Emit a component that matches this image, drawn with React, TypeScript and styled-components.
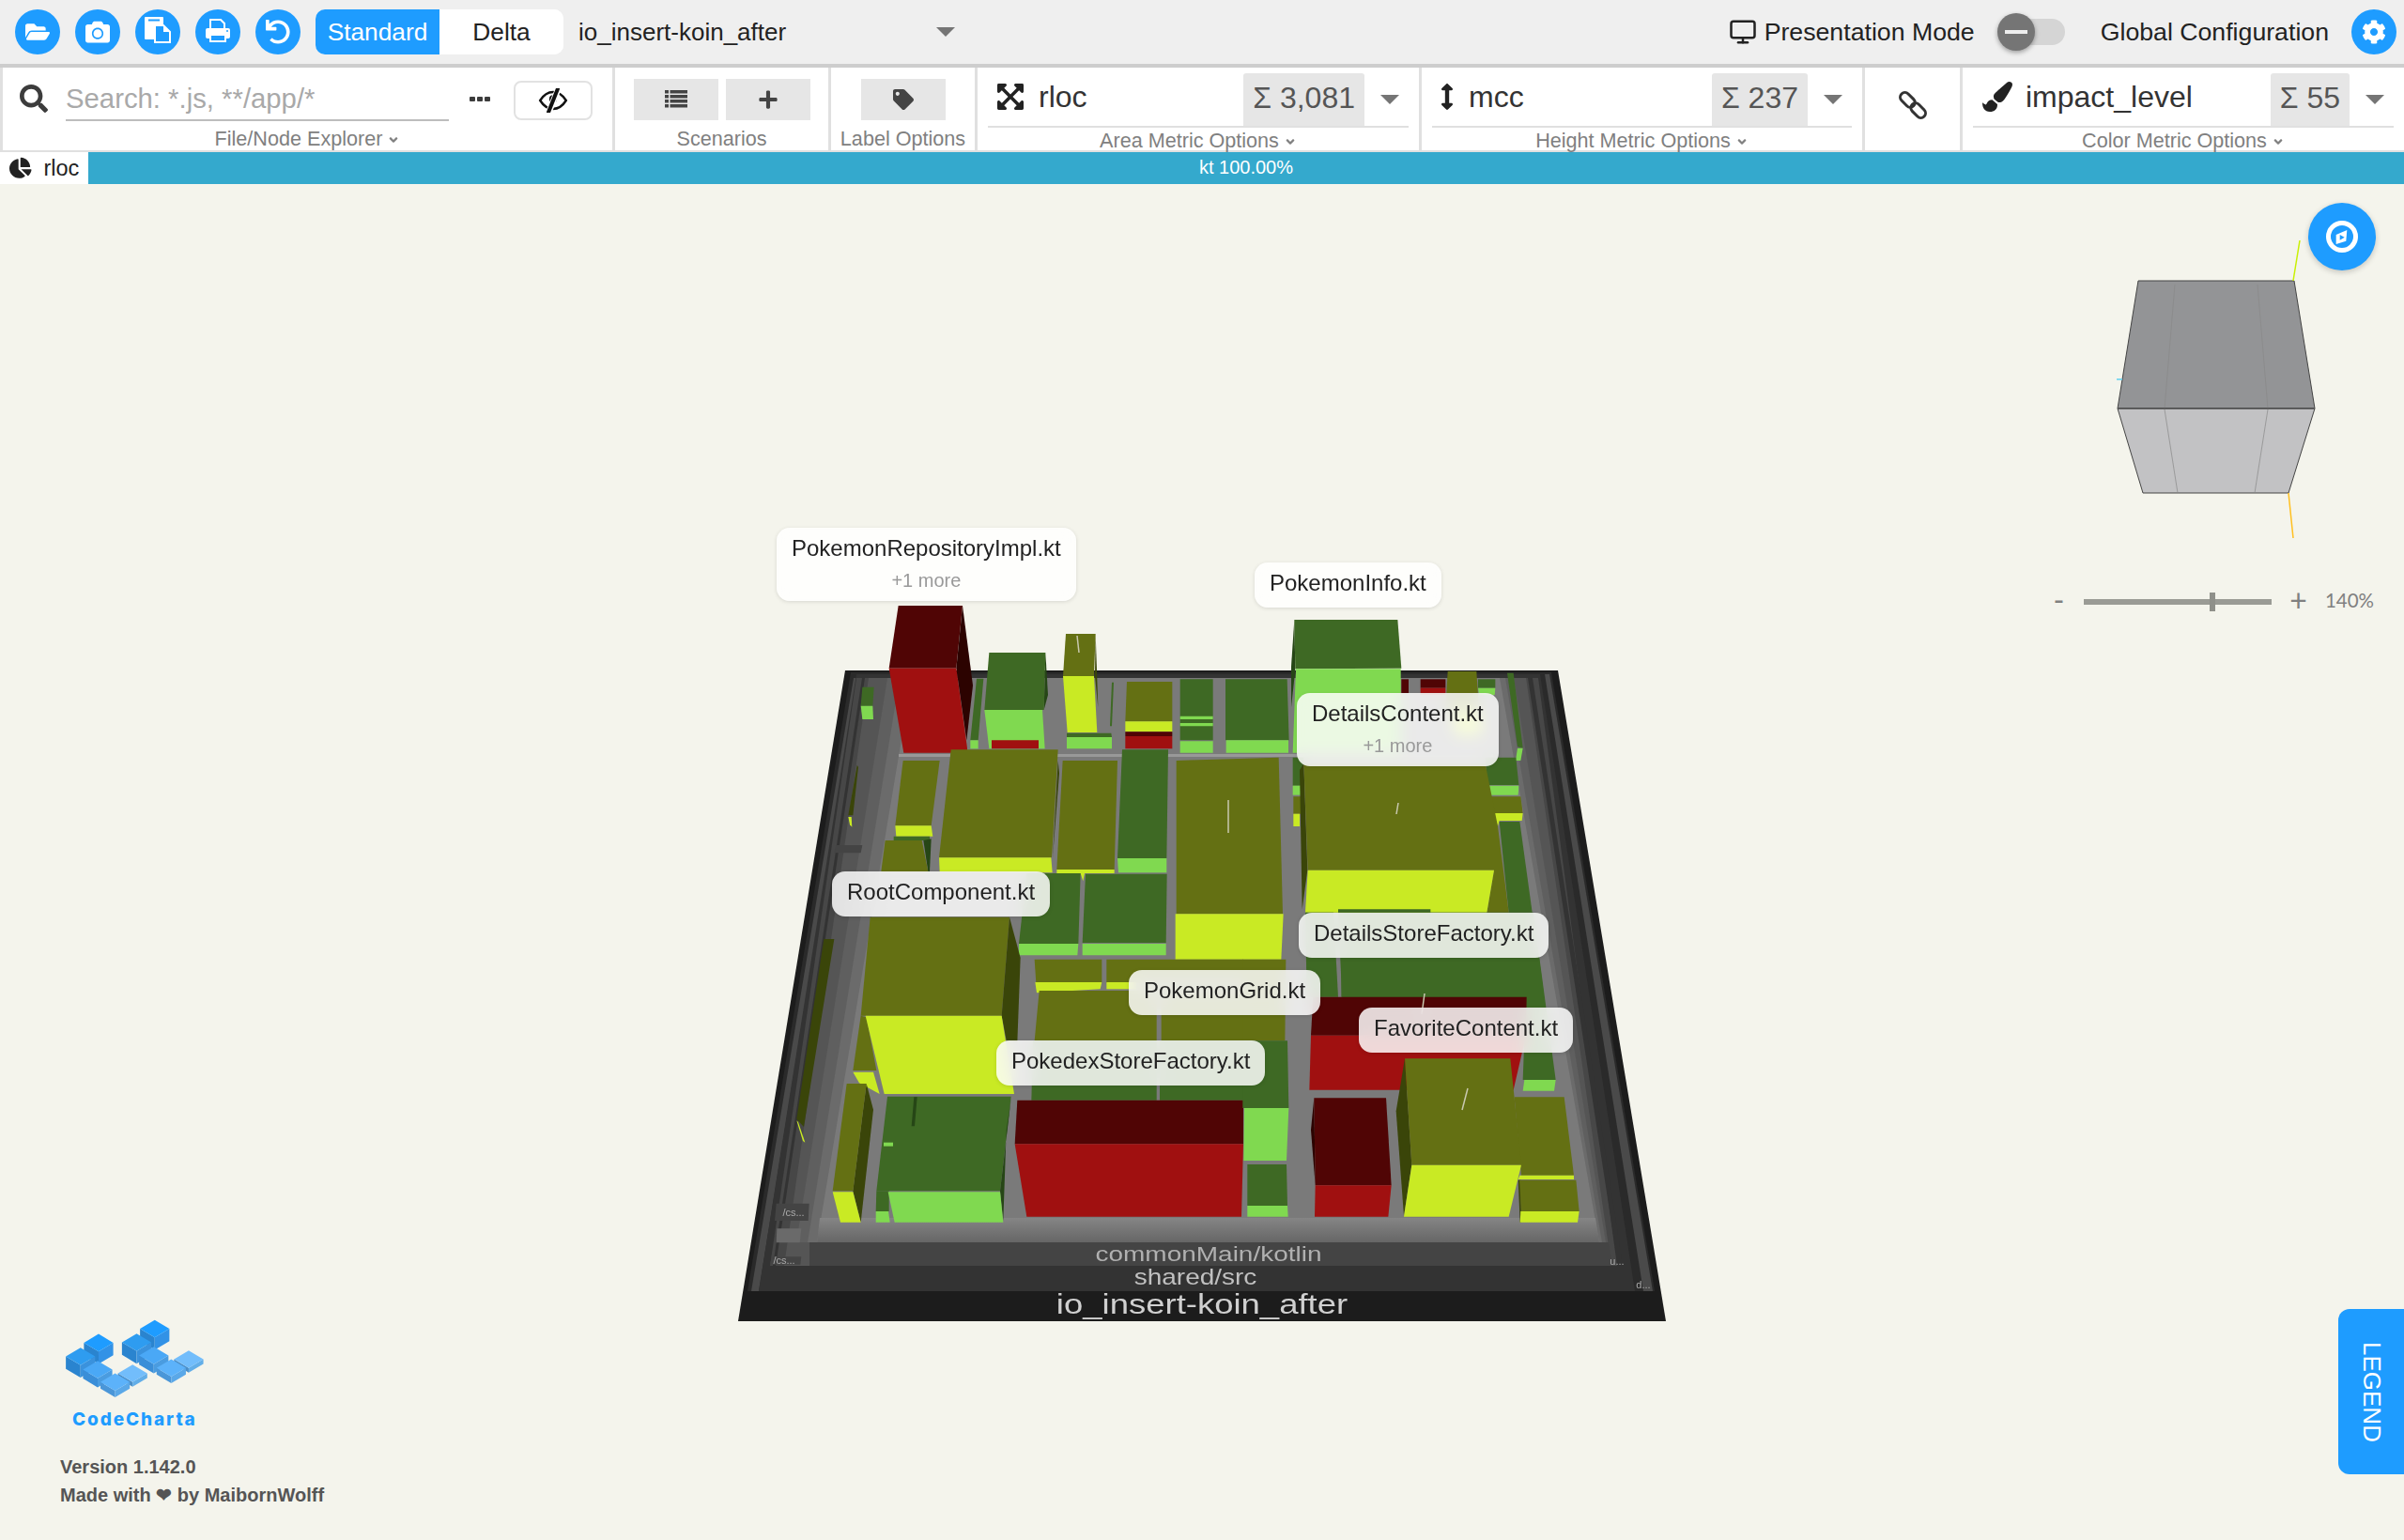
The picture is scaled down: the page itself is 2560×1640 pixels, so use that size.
import React from "react";
import styled, { createGlobalStyle } from "styled-components";
import {
  FaAngleDown,
  FaArrowsAltV,
  FaCamera,
  FaChartPie,
  FaCog,
  FaExpandArrowsAlt,
  FaFolderOpen,
  FaPaintBrush,
  FaPlus,
  FaSearch,
  FaTag,
  FaUndo,
} from "react-icons/fa";
import { FiMonitor } from "react-icons/fi";

const BLUE = "#1e9cff";

const RED = "#a01010";
const RED_TOP = "#500505";
const RED_SIDE = "#2c0300";
const OLIVE = "#647013";
const LIME = "#c9ea24";
const OLIVE_SIDE = "#3a4509";
const GREEN = "#3e6924";
const MINT = "#80d950";
const GREEN_SIDE = "#264616";

type Shape = [string, string];

// crop coordinates (3x) are turned into page coordinates
const fromCrop = (ox: number, oy: number, shapes: Shape[]): Shape[] =>
  shapes.map(([fill, pts]) => [
    fill,
    pts
      .split(" ")
      .map((p) => {
        const [x, y] = p.split(",").map(Number);
        return `${ox + x / 3},${oy + y / 3}`;
      })
      .join(" "),
  ]);

const plate: Shape[] = [
  ["#1c1c1c", "900,714 1659,714 1774,1407 786,1407"],
  ["#2a2a2a", "906,716 1652,716 1762,1375 796,1375"],
  ["#4a4a4a", "909,722 913,722 808,1375 800,1375"],
  ["#4a4a4a", "1645,718 1650,718 1760,1375 1750,1375"],
  ["#333333", "912,718 1640,718 1741,1375 808,1375"],
  ["#474747", "912,722 1638,722 1722,1348 820,1348"],
  ["#333333", "918,722 921,722 826,1348 823,1348"],
  ["#333333", "1627,722 1632,722 1728,1348 1723,1348"],
  ["#555555", "925,722 1625,722 1716,1348 835,1348"],
  ["#5f5f5f", "945,722 1612,722 1710,1323 848,1323"],
  ["#6b6b6b", "958,722 1603,722 1706,1323 860,1323"],
  ["#7a7a7a", "971,722 1597,722 1703,1323 870,1323"],
  ["url(#floorFade)", "873,1297 1699,1297 1703,1323 870,1323"],
  ["#444444", "862,1323 1713,1323 1717,1348 862,1348"],
  ["#999999", "957,803 1590,803 1590,806 957,806"],
];

const backLeft: Shape[] = fromCrop(760, 540, [
  [GREEN, "475,575 512,575 508,635 470,635"],
  [MINT, "470,635 508,635 510,678 475,678"],
  [OLIVE_SIDE, "458,825 462,830 445,985 430,985"],
  [LIME, "430,990 440,990 442,1022 435,1015"],
  ["#444444", "390,1080 475,1080 470,1105 385,1105"],
  [RED_TOP, "590,315 795,315 775,515 560,515"],
  [RED_SIDE, "795,315 828,570 808,745 775,515"],
  [RED, "560,515 775,515 810,770 810,785 607,785"],
  [GREEN, "840,548 862,548 845,745 820,745"],
  [MINT, "820,745 845,745 845,772 820,772"],
  [GREEN_SIDE, "1060,465 1068,600 1055,648"],
  [GREEN, "880,465 1060,465 1055,648 865,648"],
  [MINT, "865,648 1050,648 1058,772 880,772"],
  [RED, "888,745 1038,745 1038,772 888,772"],
  [OLIVE_SIDE, "1220,405 1228,640 1218,540"],
  [OLIVE, "1125,405 1220,405 1215,540 1116,540"],
  [LIME, "1116,540 1215,540 1225,720 1130,720"],
  [GREEN, "1272,560 1278,560 1272,700 1266,700"],
  [GREEN, "1128,722 1270,722 1272,735 1128,735"],
  [MINT, "1128,735 1272,735 1272,772 1128,772"],
  [OLIVE, "1320,558 1465,558 1465,685 1315,685"],
  [LIME, "1315,685 1465,685 1465,718 1315,718"],
  [RED_TOP, "1315,718 1465,718 1465,732 1315,732"],
  [RED, "1315,732 1465,732 1465,772 1315,772"],
  [OLIVE, "605,810 722,810 695,1018 580,1018"],
  [LIME, "580,1018 695,1018 700,1052 583,1052"],
  [GREEN, "575,1052 690,1052 690,1065 575,1065"],
  [GREEN_SIDE, "670,1065 695,1060 690,1165 685,1165"],
  [OLIVE, "548,1065 665,1065 685,1165 535,1165"],
  [OLIVE_SIDE, "1100,810 1104,850 1083,1120"],
  [OLIVE, "758,775 1100,775 1080,1120 720,1120"],
  [LIME, "720,1120 1078,1120 1082,1168 722,1165"],
  [OLIVE, "1115,810 1290,810 1280,1158 1096,1158"],
  [LIME, "1096,1158 1280,1158 1280,1170 1185,1170 1180,1195 1172,1170 1096,1170"],
  [GREEN, "1305,775 1452,775 1447,1122 1290,1122"],
  [MINT, "1290,1122 1447,1122 1447,1168 1293,1168"],
  [GREEN, "1000,1170 1172,1170 1165,1395 975,1395"],
  [MINT, "975,1395 1165,1395 1162,1432 975,1432"],
  [GREEN, "1188,1172 1448,1172 1445,1392 1178,1392"],
  [MINT, "1178,1395 1445,1395 1445,1432 1178,1432"],
]);

const backRight: Shape[] = fromCrop(1260, 580, [
  [GREEN, "-10,430 95,430 95,625 -10,625"],
  [MINT, "-10,548 95,548 95,558 -10,558"],
  [MINT, "-10,570 95,570 95,580 -10,580"],
  [MINT, "-10,628 95,628 95,665 -10,665"],
  [GREEN, "135,430 332,430 338,625 135,625"],
  [MINT, "137,625 336,625 336,665 137,665"],
  [RED_TOP, "697,430 720,430 720,475 697,475"],
  [RED_TOP, "758,430 838,430 838,458 758,458"],
  [RED, "758,458 838,458 838,480 758,480"],
  [OLIVE, "845,405 937,405 945,530 838,530"],
  [LIME, "860,530 950,530 955,610 865,610"],
  [GREEN, "942,430 997,430 997,458 942,458"],
  [MINT, "942,458 997,458 995,480 945,480"],
  [GREEN, "1035,410 1055,410 1085,650 1068,645"],
  [MINT, "1068,650 1085,650 1078,690 1062,690"],
  [GREEN_SIDE, "355,240 345,390 345,520 358,400"],
  [GREEN, "355,240 685,240 697,395 358,397"],
  [MINT, "360,397 695,397 695,665 350,665"],
  [GREEN, "350,680 385,680 378,770 350,770"],
  [MINT, "350,770 378,770 378,800 350,800"],
  [OLIVE, "352,805 378,805 375,860 352,860"],
  [LIME, "352,860 372,860 372,900 352,900"],
  [GREEN, "965,680 1063,680 1072,768 972,768"],
  [MINT, "970,770 1072,770 1070,800 972,800"],
  [OLIVE, "970,805 1078,805 1085,858 972,858"],
  [LIME, "972,858 1085,858 1082,882 1010,882 1005,900 1000,882 972,882"],
  [GREEN, "1010,885 1075,885 1115,1175 1040,1175"],
  [OLIVE_SIDE, "372,720 385,700 397,1040 380,1165"],
  [OLIVE, "385,700 965,700 1005,900 1040,1175 970,1175 993,1040 398,1040"],
  [LIME, "398,1040 993,1040 970,1175 390,1175"],
  [GREEN, "495,1165 790,1165 790,1175 495,1175"],
  [GREEN, "495,1175 1118,1175 1160,1500 510,1500"],
  [GREEN, "390,1175 480,1175 495,1445 395,1445"],
  [OLIVE, "-22,690 305,680 318,1180 -22,1180"],
  [LIME, "-25,1180 320,1180 313,1325 -25,1325"],
]);

const frontLeft: Shape[] = fromCrop(770, 1000, [
  [OLIVE_SIDE, "322,0 355,0 258,600 235,575"],
  [LIME, "235,580 240,585 262,650 255,645"],
  ["#444444", "170,845 275,845 272,900 165,900"],
  ["#6a6a6a", "172,925 250,925 245,970 170,970"],
  ["#444444", "155,1015 250,1015 247,1040 150,1040"],
  [OLIVE, "995,65 1210,65 1210,140 1000,140"],
  [LIME, "997,138 1210,138 1205,160 1002,172"],
  [OLIVE, "1225,65 1662,65 1662,140 1225,140"],
  [LIME, "1225,138 1320,138 1320,160 1225,160"],
  [OLIVE, "1010,165 1385,165 1385,325 995,325"],
  [OLIVE, "1400,165 1662,165 1662,325 1400,325"],
  [GREEN, "990,325 1385,325 1385,515 985,515"],
  [GREEN, "1395,325 1662,325 1662,515 1395,515"],
  [OLIVE, "470,-70 915,-70 890,245 440,245"],
  [OLIVE, "440,245 458,250 490,420 415,420"],
  [LIME, "415,425 480,425 500,495 435,460"],
  [OLIVE_SIDE, "915,-70 950,60 940,330 905,325 890,245"],
  [LIME, "455,245 890,245 930,495 515,495"],
  [OLIVE_SIDE, "458,462 480,545 440,905 415,805"],
  [OLIVE, "395,462 458,462 415,805 350,805"],
  [LIME, "350,808 415,808 440,905 375,905"],
  [GREEN, "525,503 920,503 885,805 490,805"],
  [GREEN, "490,805 530,805 530,870 488,870"],
  [GREEN_SIDE, "610,505 620,505 612,598 602,598"],
  [MINT, "513,650 543,650 543,662 513,662"],
  [GREEN_SIDE, "920,510 905,610 895,900 885,805"],
  [MINT, "527,808 885,808 895,905 548,905"],
  [MINT, "488,870 528,870 533,905 488,905"],
  [RED_TOP, "940,515 1662,515 1662,655 932,655"],
  [RED, "932,655 1662,655 1656,887 970,887"],
]);

const frontRight: Shape[] = fromCrop(1270, 1000, [
  [OLIVE, "160,65 298,65 295,325 160,325"],
  [GREEN, "160,325 303,325 307,540 160,540"],
  [MINT, "165,540 307,540 300,708 163,708"],
  [GREEN, "175,720 300,720 303,852 175,852"],
  [MINT, "175,852 303,852 305,887 175,887"],
  [GREEN, "475,60 1108,60 1160,450 1055,450 1065,185 475,185"],
  [MINT, "1060,450 1160,450 1155,485 1055,485"],
  [RED_TOP, "385,185 1067,185 1065,308 378,308"],
  [RED, "378,308 1065,308 1025,482 373,482"],
  [RED_SIDE, "388,508 378,610 392,787"],
  [RED_TOP, "388,508 618,508 635,787 392,787"],
  [RED, "392,787 635,787 625,887 390,887"],
  [OLIVE, "1028,505 1187,505 1218,755 1050,755"],
  [LIME, "1045,755 1218,755 1218,768 1040,768"],
  [OLIVE_SIDE, "1040,770 1048,770 1050,905 1046,905"],
  [OLIVE, "1044,770 1225,770 1235,870 1050,870"],
  [LIME, "1048,870 1235,870 1230,905 1046,905"],
  [OLIVE_SIDE, "678,382 650,550 675,885 700,722"],
  [OLIVE, "678,382 1015,382 1050,722 700,722"],
  [LIME, "700,722 1050,722 1010,887 675,887"],
]);

const buildings = [...plate, ...backLeft, ...backRight, ...frontLeft, ...frontRight];

const scratches = [
  "1147,677 1149,695",
  "1308,852 1308,887",
  "1489,855 1487,867",
  "1517,1058 1514,1080",
  "1563,1159 1557,1182",
];

const mapTexts = [
  { x: 1287, y: 1343, size: 28, squash: 0.78, fill: "#b0b0b0", text: "commonMain/kotlin" },
  { x: 1273, y: 1368, size: 28, squash: 0.85, fill: "#c0c0c0", text: "shared/src" },
  { x: 1280, y: 1399, size: 36.5, squash: 0.8, fill: "#d0d0d0", text: "io_insert-koin_after" },
  { x: 845, y: 1295, size: 11, squash: 1, fill: "#aaaaaa", text: "/cs..." },
  { x: 835, y: 1346, size: 11, squash: 1, fill: "#aaaaaa", text: "/cs..." },
  { x: 1722, y: 1347, size: 11, squash: 1, fill: "#aaaaaa", text: "u..." },
  { x: 1750, y: 1372, size: 11, squash: 1, fill: "#aaaaaa", text: "d..." },
];

const labels = [
  { x: 827, y: 562, name: "PokemonRepositoryImpl.kt", more: true },
  { x: 1336, y: 599, name: "PokemonInfo.kt" },
  { x: 1381, y: 738, name: "DetailsContent.kt", more: true },
  { x: 886, y: 928, name: "RootComponent.kt" },
  { x: 1383, y: 972, name: "DetailsStoreFactory.kt" },
  { x: 1202, y: 1033, name: "PokemonGrid.kt" },
  { x: 1447, y: 1073, name: "FavoriteContent.kt" },
  { x: 1061, y: 1108, name: "PokedexStoreFactory.kt" },
];

const GlobalStyle = createGlobalStyle`
  html, body {
    margin: 0;
    padding: 0;
    background: #f4f4ec;
  }
  * {
    box-sizing: border-box;
  }
`;

const Page = styled.div`
  display: flex;
  flex-direction: column;
  width: 2560px;
  height: 1640px;
  overflow: hidden;
  font-family: "Liberation Sans", Arial, sans-serif;
  color: #222;
`;

const TopBar = styled.header`
  display: flex;
  align-items: center;
  flex: 0 0 72px;
  padding: 0 8px 0 16px;
  background: #efefef;
  border-bottom: 4px solid #cdcdcd;
`;

const RoundButton = styled.button`
  display: flex;
  align-items: center;
  justify-content: center;
  width: 48px;
  height: 48px;
  padding: 0;
  border: 0;
  border-radius: 50%;
  background: ${BLUE};
  color: #fff;
  font-size: 26px;
`;

const ActionGroup = styled.div`
  display: flex;
  gap: 16px;
  margin-right: 16px;
`;

const ModeSwitch = styled.div`
  display: flex;
  height: 48px;
  border-radius: 10px;
  overflow: hidden;
  background: #fff;
`;

const ModeOption = styled.div<{ $active?: boolean }>`
  display: flex;
  align-items: center;
  justify-content: center;
  width: 132px;
  font-size: 26.3px;
  background: ${(p) => (p.$active ? BLUE : "#fff")};
  color: ${(p) => (p.$active ? "#fff" : "#222")};
`;

const FileSelect = styled.div`
  display: flex;
  align-items: center;
  justify-content: space-between;
  width: 401px;
  margin-left: 16px;
  font-size: 26px;
`;

const Caret = styled.span`
  flex: none;
  width: 0;
  height: 0;
  border-left: 10px solid transparent;
  border-right: 10px solid transparent;
  border-top: 10px solid #757575;
`;

const TopRight = styled.div`
  display: flex;
  align-items: center;
  margin-left: auto;
  font-size: 26.7px;
`;

const MonitorIcon = styled(FiMonitor)`
  width: 30px;
  height: 30px;
  margin-right: 8px;
`;

const ToggleTrack = styled.div`
  position: relative;
  width: 60px;
  height: 28px;
  margin: 0 38px 0 36px;
  border-radius: 14px;
  background: #d5d5d5;
`;

const ToggleThumb = styled.div`
  position: absolute;
  left: -12px;
  top: -6px;
  display: flex;
  align-items: center;
  justify-content: center;
  width: 40px;
  height: 40px;
  border-radius: 50%;
  background: #757575;
  box-shadow: 0 2px 5px rgba(0, 0, 0, 0.35);

  &::after {
    content: "";
    width: 24px;
    height: 4px;
    background: #eee;
  }
`;

const ConfigLabel = styled.span`
  margin-right: 24px;
`;

const Toolbar = styled.div`
  display: grid;
  grid-template-columns: 649px 227px 153px 470px 469px 101px 1fr;
  grid-template-rows: 88px;
  gap: 3px;
  flex: 0 0 90px;
  padding: 0 0 2px 3px;
  background: #e0e0e0;
`;

const Panel = styled.section`
  display: flex;
  flex-direction: column;
  min-width: 0;
  background: #fff;
`;

const ControlRow = styled.div`
  display: flex;
  flex: none;
  align-items: flex-start;
  justify-content: center;
  height: 60px;
  padding-top: 12px;
  gap: 8px;
`;

const SearchRow = styled.div`
  display: flex;
  flex: none;
  align-items: flex-start;
  height: 60px;
  padding: 14px 0 0 17px;
`;

const SearchGlyph = styled(FaSearch)`
  width: 32px;
  height: 30px;
  margin: 4px 18px 0 0;
  color: #3c3c3c;
`;

const SearchInput = styled.input`
  width: 408px;
  height: 43px;
  padding: 0 0 4px;
  border: 0;
  border-bottom: 2px solid #bdbdbd;
  background: transparent;
  font: 29.3px "Liberation Sans", Arial, sans-serif;
  outline: none;

  &::placeholder {
    color: #a9a9a9;
    opacity: 1;
  }
`;

const MoreDots = styled.span`
  display: flex;
  gap: 2px;
  margin: 17px 25px 0 22px;

  & > i {
    width: 6px;
    height: 5px;
    border-radius: 1px;
    background: #3c3c3c;
  }
`;

const EyeButton = styled.button`
  display: flex;
  align-items: center;
  justify-content: center;
  width: 84px;
  height: 42px;
  padding: 0;
  border: 2px solid #e2e2e2;
  border-radius: 8px;
  background: #fff;
`;

const SquareButton = styled.button`
  display: flex;
  align-items: center;
  justify-content: center;
  width: 90px;
  height: 44px;
  padding: 0;
  border: 0;
  background: #e6e6e6;
  color: #444;
  font-size: 22px;
`;

const PanelLabel = styled.div`
  flex: none;
  height: 26px;
  margin-top: 2px;
  font-size: 21.6px;
  line-height: 28px;
  text-align: center;
  color: #808080;
  white-space: nowrap;
`;

const MetricBody = styled.div`
  flex: none;
  padding: 0 11px;
`;

const MetricRow = styled.div`
  display: flex;
  align-items: center;
  height: 64px;
  border-bottom: 2px solid #e0e0e0;
`;

const MetricGlyph = styled.span<{ $offset: number; $width: number; $gap: number }>`
  display: flex;
  flex: none;
  justify-content: center;
  width: ${(p) => p.$width}px;
  margin: 0 ${(p) => p.$gap}px 0 ${(p) => p.$offset}px;
  color: #222;
  font-size: 32px;
`;

const MetricName = styled.span`
  flex: 1;
  font-size: 32px;
  color: #333;
`;

const MetricSum = styled.span`
  align-self: flex-end;
  height: 56px;
  padding: 0 10px 4px;
  border-radius: 3px 3px 0 0;
  background: #e6e6e6;
  color: #555;
  font-size: 32px;
  line-height: 52px;
`;

const MetricCaret = styled(Caret)`
  margin: 6px 10px 0 17px;
`;

const MetricLabel = styled(PanelLabel)`
  height: 22px;
  line-height: 22px;
  margin-top: 3px;
`;

const LinkCell = styled.div`
  display: flex;
  align-items: center;
  justify-content: center;
  height: 80px;
`;

const SmallChevron = styled(FaAngleDown)`
  width: 14px;
  height: 14px;
  margin-left: 5px;
  vertical-align: -1px;
`;

const BreadcrumbBar = styled.div`
  display: flex;
  flex: 0 0 34px;
`;

const MetricTab = styled.div`
  display: flex;
  align-items: center;
  flex: 0 0 94px;
  padding-left: 10px;
  gap: 13px;
  background: #fff;
  font-size: 23.5px;
`;

const ShareBar = styled.div`
  flex: 1;
  background: #34a9cd;
  color: #fff;
  font-size: 20px;
  line-height: 33px;
  text-align: center;
`;

const Canvas = styled.main`
  position: relative;
  flex: 1;
  background: #f4f4ec;
`;

const CityMap = styled.svg`
  position: absolute;
  left: 770px;
  top: 344px;
  width: 1020px;
  height: 880px;
  filter: blur(0.6px);
`;

const MapText = styled.text`
  font-family: "Liberation Sans", Arial, sans-serif;
  text-anchor: middle;
`;

const MapLabel = styled.div<{ $x: number; $y: number }>`
  position: absolute;
  left: ${(p) => p.$x}px;
  top: ${(p) => p.$y - 196}px;
  padding: 7px 16px 11px;
  border-radius: 14px;
  background: rgba(255, 255, 255, 0.84);
  backdrop-filter: blur(8px);
  box-shadow: 0 1px 4px rgba(0, 0, 0, 0.12);
  text-align: center;
  white-space: nowrap;
`;

const LabelName = styled.div`
  font-size: 24px;
  line-height: 30px;
  color: #222;
`;

const LabelMore = styled.div`
  margin-top: 8px;
  font-size: 20px;
  line-height: 22px;
  color: #999;
`;

const ViewCube = styled.svg`
  position: absolute;
  left: 2250px;
  top: 54px;
  width: 220px;
  height: 330px;
`;

const CompassButton = styled(RoundButton)`
  position: absolute;
  left: 2458px;
  top: 20px;
  width: 72px;
  height: 72px;
  box-shadow: 0 2px 6px rgba(0, 0, 0, 0.2);
`;

const ZoomControl = styled.div`
  position: absolute;
  right: 32px;
  top: 425px;
  display: flex;
  align-items: center;
  height: 36px;
  font-family: Lato, sans-serif;
  color: #808080;
`;

const ZoomSign = styled.span`
  font-size: 32px;
  line-height: 36px;
`;

const ZoomTrack = styled.div`
  position: relative;
  width: 200px;
  height: 6px;
  margin: 4px 19px 0 21px;
  background: #9a9b95;
`;

const ZoomThumb = styled.div`
  position: absolute;
  left: 134px;
  top: -7px;
  width: 6px;
  height: 20px;
  background: #8f908a;
`;

const ZoomValue = styled.span`
  margin-left: 19px;
  font-size: 20.5px;
`;

const LegendTab = styled.button`
  position: absolute;
  right: 0;
  top: 1198px;
  width: 70px;
  height: 176px;
  padding: 0;
  border: 0;
  border-radius: 12px 0 0 12px;
  background: ${BLUE};
  color: #fff;
  font: 26px "Liberation Sans", Arial, sans-serif;
  writing-mode: vertical-rl;
  text-align: center;
`;

const Branding = styled.div`
  position: absolute;
  left: 64px;
  top: 1207px;
  display: flex;
  flex-direction: column;
`;

const LogoMark = styled.svg`
  width: 153px;
  height: 88px;
  margin-left: 3px;
`;

const Wordmark = styled.div`
  margin: 9px 0 23px 13px;
  font-family: Inter, sans-serif;
  font-size: 19px;
  font-weight: 800;
  line-height: 24px;
  letter-spacing: 1.9px;
  color: ${BLUE};
`;

const Credit = styled.div`
  font-size: 20px;
  font-weight: 700;
  line-height: 30px;
  color: #555;
`;

const CopyIcon = () => (
  <svg width="48" height="48" viewBox="0 0 48 48">
    <rect x="10" y="8" width="20" height="24" fill="#fff" rx="1" />
    <rect x="14" y="10.5" width="12" height="2" fill={BLUE} />
    <path d="M21 17h9l7 7v11H21z" fill={BLUE} stroke="#fff" strokeWidth="2" />
    <path d="M30 17l7 7h-7z" fill="#fff" />
  </svg>
);

const PrintIcon = () => (
  <svg width="48" height="48" viewBox="0 0 48 48">
    <path d="M16 22V11h11l4 4v7" fill={BLUE} stroke="#fff" strokeWidth="2" />
    <rect x="11" y="20" width="26" height="11" rx="2" fill="#fff" />
    <rect x="16" y="27" width="16" height="7" fill={BLUE} stroke="#fff" strokeWidth="2" />
    <circle cx="34" cy="23" r="1" fill={BLUE} />
  </svg>
);

const EyeSlashIcon = () => (
  <svg width="34" height="26" viewBox="0 0 40 32">
    <path d="M3 16Q10 5 20 5Q30 5 37 16Q30 27 20 27Q10 27 3 16Z" fill="none" stroke="#111" strokeWidth="3" />
    <circle cx="20" cy="14" r="5" fill="#111" />
    <path d="M27 0L14 32" stroke="#fff" strokeWidth="8" />
    <path d="M26 1L14 31" stroke="#111" strokeWidth="5" strokeLinecap="round" />
  </svg>
);

const ListIcon = () => (
  <svg width="24" height="20" viewBox="0 0 24 20" fill="#444">
    {[0, 5, 10, 15].map((y) => (
      <g key={y}>
        <rect x="0" y={y} width="4" height="3.5" />
        <rect x="5.5" y={y} width="18.5" height="3.5" />
      </g>
    ))}
  </svg>
);

const LinkIcon = () => (
  <svg width="34" height="34" viewBox="0 0 34 34" fill="none" stroke="#333" strokeWidth="3">
    <g transform="rotate(45 17 17)">
      <rect x="0" y="12" width="18" height="10" rx="5" />
      <rect x="16" y="12" width="18" height="10" rx="5" />
    </g>
  </svg>
);

const CompassIcon = () => (
  <svg width="40" height="40" viewBox="-20 -20 40 40">
    <circle r="14.5" fill="none" stroke="#fff" strokeWidth="5" />
    <polygon points="5.3,-7 4.3,4.7 -6.3,8 -6.3,-2" fill="#fff" />
    <polygon points="-2.3,-2 2.7,0.7 -2.3,3.7" fill={BLUE} />
  </svg>
);

const Cube = ({ dx = 0, dy = 0, depth, top, left, right }: { dx?: number; dy?: number; depth: number; top: string; left: string; right: string }) => (
  <g transform={`translate(${dx} ${dy})`}>
    <polygon points={`-47,0 0,28 0,${28 + depth} -47,${depth}`} fill={left} />
    <polygon points={`47,0 0,28 0,${28 + depth} 47,${depth}`} fill={right} />
    <polygon points="0,-28 47,0 0,28 -47,0" fill={top} />
  </g>
);

const CubeGroup = ({ dx, dy }: { dx: number; dy: number }) => (
  <g transform={`translate(${dx} ${dy})`}>
    <Cube dx={314} dy={151} depth={40} top="#1e9cff" left="#2a84cf" right="#3292e6" />
    <Cube dx={256} dy={195} depth={40} top="#2e9cf0" left="#2a84cf" right="#3a92dd" />
    <Cube dx={423} dy={249} depth={15} top="#72bdfb" left="#4a8ec8" right="#62aee8" />
    <Cube dx={311} dy={237} depth={29} top="#4aa8f6" left="#3a8ed8" right="#4a9ce0" />
    <Cube dx={367} dy={277} depth={21} top="#5cb2fa" left="#4a96d8" right="#5aa8e8" />
  </g>
);

export default function App() {
  return (
    <Page>
      <GlobalStyle />
      <TopBar>
        <ActionGroup>
          <RoundButton><FaFolderOpen /></RoundButton>
          <RoundButton><FaCamera /></RoundButton>
          <RoundButton><CopyIcon /></RoundButton>
          <RoundButton><PrintIcon /></RoundButton>
          <RoundButton><FaUndo /></RoundButton>
        </ActionGroup>
        <ModeSwitch>
          <ModeOption $active>Standard</ModeOption>
          <ModeOption>Delta</ModeOption>
        </ModeSwitch>
        <FileSelect>
          io_insert-koin_after
          <Caret />
        </FileSelect>
        <TopRight>
          <MonitorIcon />
          Presentation Mode
          <ToggleTrack>
            <ToggleThumb />
          </ToggleTrack>
          <ConfigLabel>Global Configuration</ConfigLabel>
          <RoundButton><FaCog /></RoundButton>
        </TopRight>
      </TopBar>

      <Toolbar>
        <Panel>
          <SearchRow>
            <SearchGlyph />
            <SearchInput placeholder="Search: *.js, **/app/*" readOnly />
            <MoreDots><i /><i /><i /></MoreDots>
            <EyeButton><EyeSlashIcon /></EyeButton>
          </SearchRow>
          <PanelLabel>File/Node Explorer<SmallChevron /></PanelLabel>
        </Panel>
        <Panel>
          <ControlRow>
            <SquareButton><ListIcon /></SquareButton>
            <SquareButton><FaPlus /></SquareButton>
          </ControlRow>
          <PanelLabel>Scenarios</PanelLabel>
        </Panel>
        <Panel>
          <ControlRow>
            <SquareButton><FaTag /></SquareButton>
          </ControlRow>
          <PanelLabel>Label Options</PanelLabel>
        </Panel>
        <Panel>
          <MetricBody>
            <MetricRow>
              <MetricGlyph $offset={10} $width={28} $gap={16}><FaExpandArrowsAlt /></MetricGlyph>
              <MetricName>rloc</MetricName>
              <MetricSum>Σ 3,081</MetricSum>
              <MetricCaret />
            </MetricRow>
          </MetricBody>
          <MetricLabel>Area Metric Options<SmallChevron /></MetricLabel>
        </Panel>
        <Panel>
          <MetricBody>
            <MetricRow>
              <MetricGlyph $offset={9} $width={14} $gap={16}><FaArrowsAltV /></MetricGlyph>
              <MetricName>mcc</MetricName>
              <MetricSum>Σ 237</MetricSum>
              <MetricCaret />
            </MetricRow>
          </MetricBody>
          <MetricLabel>Height Metric Options<SmallChevron /></MetricLabel>
        </Panel>
        <Panel>
          <LinkCell><LinkIcon /></LinkCell>
        </Panel>
        <Panel>
          <MetricBody>
            <MetricRow>
              <MetricGlyph $offset={10} $width={32} $gap={14}><FaPaintBrush /></MetricGlyph>
              <MetricName>impact_level</MetricName>
              <MetricSum>Σ 55</MetricSum>
              <MetricCaret />
            </MetricRow>
          </MetricBody>
          <MetricLabel>Color Metric Options<SmallChevron /></MetricLabel>
        </Panel>
      </Toolbar>

      <BreadcrumbBar>
        <MetricTab><FaChartPie />rloc</MetricTab>
        <ShareBar>kt 100.00%</ShareBar>
      </BreadcrumbBar>

      <Canvas>
        <CityMap viewBox="770 540 1020 880">
          <defs>
            <linearGradient id="floorFade" x1="0" y1="0" x2="0" y2="1">
              <stop offset="0" stopColor="#858585" />
              <stop offset="1" stopColor="#666666" />
            </linearGradient>
          </defs>
          {buildings.map(([fill, points], i) => (
            <polygon key={i} fill={fill} points={points} />
          ))}
          {scratches.map((points, i) => (
            <polyline key={i} points={points} stroke="#c9c9b0" strokeWidth="1.5" fill="none" />
          ))}
          {mapTexts.map((t) => (
            <MapText
              key={t.y + t.text}
              transform={`translate(${t.x} ${t.y}) scale(1 ${t.squash})`}
              fontSize={t.size}
              fill={t.fill}
            >
              {t.text}
            </MapText>
          ))}
        </CityMap>

        {labels.map((l) => (
          <MapLabel key={l.name} $x={l.x} $y={l.y}>
            <LabelName>{l.name}</LabelName>
            {l.more && <LabelMore>+1 more</LabelMore>}
          </MapLabel>
        ))}

        <ViewCube viewBox="2250 250 220 330">
          <polygon points="2277,299 2443,299 2465,435 2255,435" fill="#939496" stroke="#444" strokeWidth="1" />
          <polygon points="2255,435 2465,435 2437,525 2282,525" fill="#c2c2c4" stroke="#444" strokeWidth="1" />
          <path d="M2316 303L2305 435M2404 303L2415 435M2305 436L2319 525M2415 436L2401 525" stroke="#888" strokeWidth="0.7" fill="none" />
          <path d="M2255 435H2465" stroke="#555" strokeWidth="1.5" />
          <path d="M2442 299L2449 256" stroke="#c8f000" strokeWidth="1.5" />
          <path d="M2437 525L2442 573" stroke="#ffc020" strokeWidth="1.5" />
          <path d="M2254 404H2260" stroke="#60d0f0" strokeWidth="1.5" />
        </ViewCube>

        <CompassButton><CompassIcon /></CompassButton>

        <ZoomControl>
          <ZoomSign>-</ZoomSign>
          <ZoomTrack>
            <ZoomThumb />
          </ZoomTrack>
          <ZoomSign>+</ZoomSign>
          <ZoomValue>140%</ZoomValue>
        </ZoomControl>

        <LegendTab>LEGEND</LegendTab>

        <Branding>
          <LogoMark viewBox="200 70 460 265">
            <CubeGroup dx={0} dy={0} />
            <CubeGroup dx={180} dy={-45} />
          </LogoMark>
          <Wordmark>CodeCharta</Wordmark>
          <Credit>Version 1.142.0</Credit>
          <Credit>Made with ❤ by MaibornWolff</Credit>
        </Branding>
      </Canvas>
    </Page>
  );
}
